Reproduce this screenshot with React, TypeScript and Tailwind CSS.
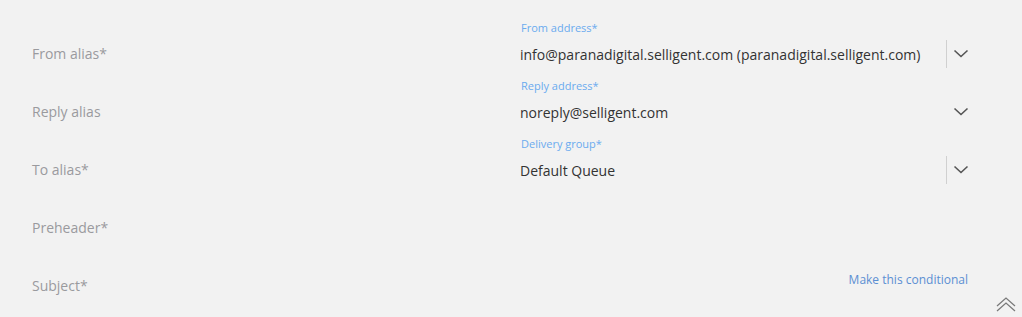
import React from "react";

function Chevron() {
  return (
    <svg width="16" height="10" viewBox="0 0 16 10" fill="none">
      <path d="M1.5 1.5 L8 7.5 L14.5 1.5" stroke="#555" strokeWidth="1.6" />
    </svg>
  );
}

function Select({ label, value, divider }: { label: string; value: string; divider: boolean }) {
  return (
    <div className="flex flex-col">
      <div className="text-[11px] leading-[14px] text-[#6aabef] pl-[1px]">{label}</div>
      <div className="mt-[5px] flex h-[28px] items-center">
        <div className="flex-1 text-[14px] text-[#333]">{value}</div>
        <div className={`h-[28px] w-px ${divider ? "bg-[#d0d0d0]" : "bg-transparent"}`} />
        <div className="flex w-[26px] items-center justify-center pl-[2px]">
          <Chevron />
        </div>
      </div>
    </div>
  );
}

export default function App() {
  const rows = [
    { left: "From alias*", label: "From address*", value: "info@paranadigital.selligent.com (paranadigital.selligent.com)", divider: true },
    { left: "Reply alias", label: "Reply address*", value: "noreply@selligent.com", divider: false },
    { left: "To alias*", label: "Delivery group*", value: "Default Queue", divider: true },
  ];
  return (
    <div
      className="relative h-[317px] w-[1022px] overflow-hidden bg-[#f2f2f2] pt-[21px] pl-[32px]"
      style={{ fontFamily: '"Open Sans", "Noto Sans", sans-serif' }}
    >
      {rows.map((r) => (
        <div key={r.left} className="grid h-[58px] grid-cols-[488px_453px]">
          <div className="pt-[23px] text-[14px] leading-[20px] text-[#9a9a9e]">{r.left}</div>
          <Select label={r.label} value={r.value} divider={r.divider} />
        </div>
      ))}
      <div className="grid h-[58px] grid-cols-[488px_453px]">
        <div className="pt-[23px] text-[14px] leading-[20px] text-[#9a9a9e]">Preheader*</div>
        <div />
      </div>
      <div className="grid h-[58px] grid-cols-[488px_453px]">
        <div className="pt-[23px] text-[14px] leading-[20px] text-[#9a9a9e]">Subject*</div>
        <div className="flex justify-end pt-[19px] pr-[5px]">
          <span className="text-[12px] leading-[16px] text-[#5b8fd3]">Make this conditional</span>
        </div>
      </div>
      <div className="absolute right-[6px] bottom-[4px]">
        <svg width="20" height="16" viewBox="0 0 20 16" fill="none">
          <path d="M1 9 L10 1 L19 9" stroke="#7a7a7a" strokeWidth="1.3" />
          <path d="M1 14 L10 6 L19 14" stroke="#7a7a7a" strokeWidth="1.3" />
        </svg>
      </div>
    </div>
  );
}
